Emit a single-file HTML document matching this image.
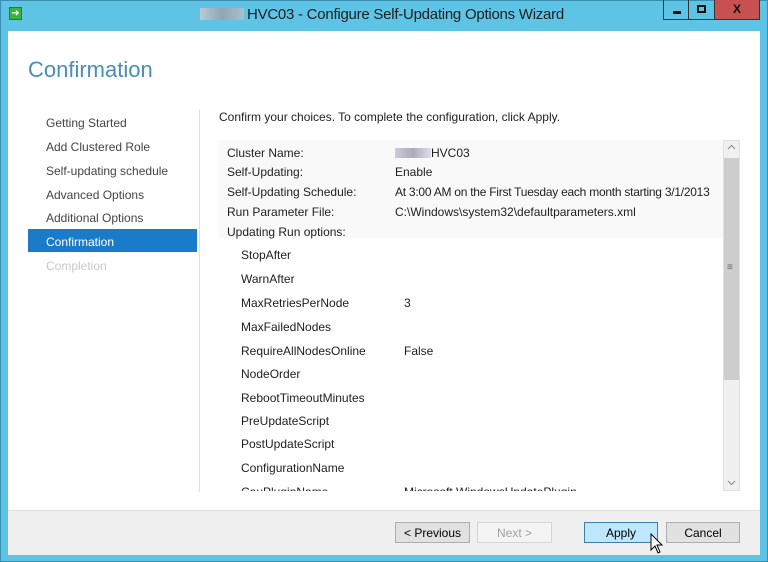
<!DOCTYPE html>
<html><head><style>
body{margin:0;width:768px;height:562px;background:#5ec4e6;font-family:"Liberation Sans",sans-serif;position:relative;overflow:hidden}
.a{position:absolute}
.t{font-size:12px;color:#1e1e1e;white-space:nowrap}
.btn{position:absolute;top:522px;height:21px;border:1px solid #adadad;background:#e1e1e1;font-size:12px;text-align:center;line-height:21px;box-sizing:border-box}
</style></head><body>
<div class="a" style="left:0;top:0;width:768px;height:562px;border:1px solid #3a8fb0;box-sizing:border-box"></div>
<div class="a" style="left:9px;top:7px;width:13px;height:13px;background:#3bb33b;border:1px solid #2a7a2a;box-sizing:border-box;color:#fff;font-size:10px;line-height:11px;text-align:center">➜</div>
<div class="a" style="left:200px;top:8px;width:44px;height:12px;background:linear-gradient(90deg,#b7cbd6,#8fa6b3,#a9bfcb)"></div>
<div class="a" style="left:247px;top:6px;font-size:15px;letter-spacing:-0.25px;color:#1e1e1e">HVC03 - Configure Self-Updating Options Wizard</div>
<div class="a" style="left:663px;top:0;width:26px;height:20px;border:1px solid #333;border-top:0;box-sizing:border-box"><div class="a" style="left:9px;top:11px;width:8px;height:3px;background:#111"></div></div>
<div class="a" style="left:689px;top:0;width:26px;height:20px;border:1px solid #333;border-top:0;border-left:0;box-sizing:border-box"><div class="a" style="left:8px;top:5px;width:9px;height:8px;border:2px solid #111;box-sizing:border-box"></div></div>
<div class="a" style="left:715px;top:0;width:45px;height:20px;background:#c75050;border:1px solid #333;border-top:0;border-left:0;box-sizing:border-box;text-align:center;font-weight:bold;font-size:12px;line-height:19px;color:#111">X</div>
<div class="a" style="left:8px;top:31px;width:752px;height:479px;background:#fff"></div>
<div class="a" style="left:8px;top:510px;width:752px;height:44px;background:#f0f0f0;border-top:1px solid #dfdfdf"></div>
<div class="a" style="left:28px;top:57px;font-size:22px;color:#4a8db5">Confirmation</div>
<div class="a" style="left:199px;top:110px;width:1px;height:382px;background:#e0e0e0"></div>
<div class="a t" style="left:46px;top:116px;color:#444">Getting Started</div>
<div class="a t" style="left:46px;top:140px;color:#444">Add Clustered Role</div>
<div class="a t" style="left:46px;top:164px;color:#444">Self-updating schedule</div>
<div class="a t" style="left:46px;top:188px;color:#444">Advanced Options</div>
<div class="a t" style="left:46px;top:211px;color:#444">Additional Options</div>
<div class="a" style="left:28px;top:229px;width:169px;height:23px;background:#1a7cc9"></div>
<div class="a t" style="left:46px;top:235px;color:#fff">Confirmation</div>
<div class="a t" style="left:46px;top:259px;color:#c8c8c8">Completion</div>
<div class="a t" style="left:219px;top:110px">Confirm your choices. To complete the configuration, click Apply.</div>
<div class="a" style="left:219px;top:140px;width:504px;height:351px;background:#f9f9f9;overflow:hidden">
<div class="a" style="left:0;top:98px;width:504px;height:260px;background:#fff"></div>
</div>
<div class="a t" style="left:227px;top:146px">Cluster Name:</div>
<div class="a" style="left:395px;top:148px;width:36px;height:10px;background:linear-gradient(90deg,#ccd,#aab,#dde)"></div>
<div class="a t" style="left:431px;top:146px">HVC03</div>
<div class="a t" style="left:227px;top:165px">Self-Updating:</div><div class="a t" style="left:395px;top:165px">Enable</div>
<div class="a t" style="left:227px;top:185px">Self-Updating Schedule:</div><div class="a t" style="left:395px;top:185px;letter-spacing:-0.25px">At 3:00 AM on the First Tuesday each month starting 3/1/2013</div>
<div class="a t" style="left:227px;top:205px">Run Parameter File:</div><div class="a t" style="left:395px;top:205px">C:\Windows\system32\defaultparameters.xml</div>
<div class="a t" style="left:227px;top:225px">Updating Run options:</div>
<div class="a" style="left:219px;top:240px;width:504px;height:251px;overflow:hidden">
<div class="a t" style="left:22px;top:8px">StopAfter</div>
<div class="a t" style="left:22px;top:32px">WarnAfter</div>
<div class="a t" style="left:22px;top:56px">MaxRetriesPerNode</div><div class="a t" style="left:185px;top:56px">3</div>
<div class="a t" style="left:22px;top:80px">MaxFailedNodes</div>
<div class="a t" style="left:22px;top:104px">RequireAllNodesOnline</div><div class="a t" style="left:185px;top:104px">False</div>
<div class="a t" style="left:22px;top:127px">NodeOrder</div>
<div class="a t" style="left:22px;top:151px">RebootTimeoutMinutes</div>
<div class="a t" style="left:22px;top:174px">PreUpdateScript</div>
<div class="a t" style="left:22px;top:197px">PostUpdateScript</div>
<div class="a t" style="left:22px;top:221px">ConfigurationName</div>
<div class="a t" style="left:22px;top:245px">CauPluginName</div><div class="a t" style="left:185px;top:245px">Microsoft.WindowsUpdatePlugin</div>
</div>
<div class="a" style="left:723px;top:140px;width:17px;height:351px;background:#f0f0f0;border:1px solid #e0e0e0;box-sizing:border-box"></div>
<div class="a" style="left:724px;top:158px;width:15px;height:222px;background:#cdcdcd"></div>
<div class="a" style="left:727px;top:262px;font-size:10px;color:#666">≡</div>
<svg class="a" style="left:727px;top:144px" width="9" height="6"><path d="M1 5 L4.5 1.5 L8 5" fill="none" stroke="#888"/></svg>
<svg class="a" style="left:727px;top:480px" width="9" height="6"><path d="M1 1 L4.5 4.5 L8 1" fill="none" stroke="#888"/></svg>
<div class="btn" style="left:395px;width:75px">&lt; Previous</div>
<div class="btn" style="left:477px;width:75px;background:#f4f4f4;border-color:#d5d5d5;color:#a0a0a0">Next &gt;</div>
<div class="btn" style="left:584px;width:74px;background:#bee6fd;border-color:#3c7fb1">Apply</div>
<div class="btn" style="left:666px;width:74px">Cancel</div>
<svg class="a" style="left:650px;top:533px" width="14" height="22"><path d="M1 1 L1 17 L5 13 L8 20 L10 19 L7 12 L12 12 Z" fill="#fff" stroke="#000"/></svg>
</body></html>
